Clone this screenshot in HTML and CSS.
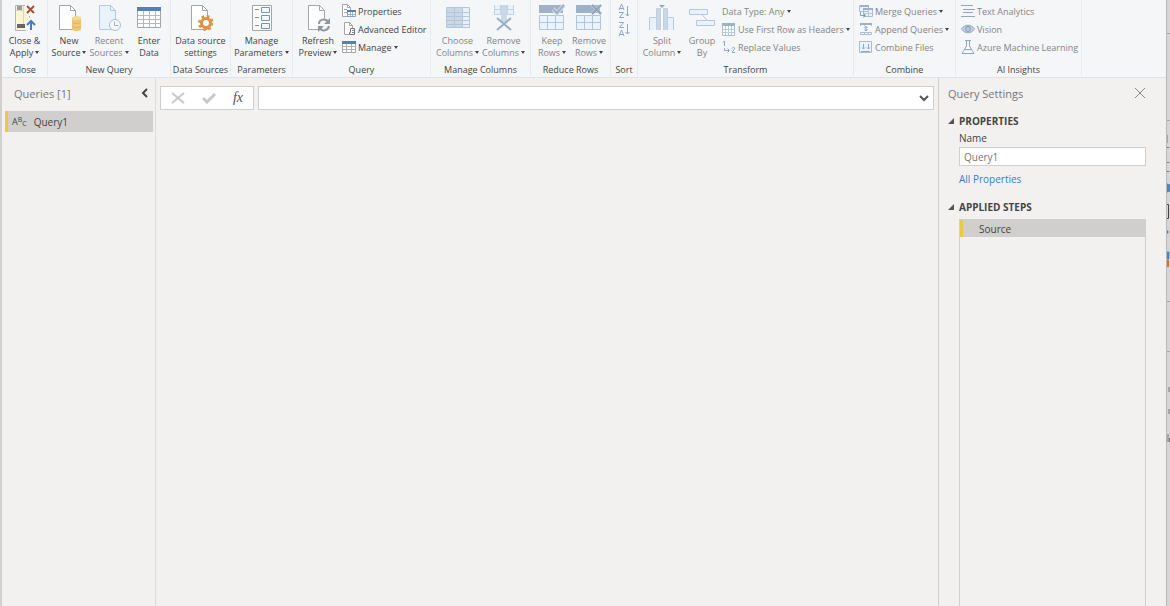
FILE: index.html
```html
<!DOCTYPE html>
<html lang="en">
<head>
    <meta charset="UTF-8">
    <meta name="viewport" content="width=device-width, initial-scale=1.0">
    <title>Power Query Editor</title>
    <link rel="stylesheet" href="styles.css">
</head>
<body>
    <div class="window">
        <!-- Ribbon -->
        <header class="ribbon">
            <section class="group close">
                <div class="tools">
                    <button class="big">
                        <svg width="24" height="28" viewBox="0 0 24 28"><path d="M2.500 1.500h14v25h-14z" fill="#fbf6cf" stroke="#b5b5b5"/><path d="M4 2h5v4H4z" fill="#9b9b9b"/><path d="M3 6.500h7M10.500 2v18" stroke="#d5d5c8"/><path d="M4 20h8v4H4z" fill="#66666a"/><path d="M12 0h12v12H12zM13 14h11v14H13z" fill="#f4f6f8"/><path d="M12 11l4-4v8l-4 4z" fill="#fbf6cf"/><path d="M14 2l7 7M21 2l-7 7" stroke="#a8532f" stroke-width="2"/><path d="M18 26v-8M14 21l4-4 4 4" fill="none" stroke="#4a7ebb" stroke-width="2"/></svg>
                        <span>Close &amp;<br>Apply<i class="caret"></i></span>
                    </button>
                </div>
                <h2>Close</h2>
            </section>
            <section class="group new-query">
                <div class="tools">
                    <button class="big">
                        <svg width="24" height="28" viewBox="0 0 24 28"><path d="M2.500 1.500h11l5 5v19h-16z" fill="#fff" stroke="#a6a6a6"/><path d="M13.500 1.500v5h5" fill="none" stroke="#a6a6a6"/><path d="M15 14v11c0 3 9 3 9 0V14z" fill="#eec779"/><ellipse cx="19.500" cy="14" rx="4.500" ry="2" fill="#f4d999"/><path d="M15 18c1 2 8 2 9 0M15 22c1 2 8 2 9 0" fill="none" stroke="#e4b45c"/></svg>
                        <span>New<br>Source<i class="caret"></i></span>
                    </button>
                    <button class="big off">
                        <svg width="24" height="28" viewBox="0 0 24 28"><path d="M2.500 1.500h11l5 5v19h-16z" fill="#eaf2fc" stroke="#b3cae2"/><path d="M13.500 1.500v5h5" fill="none" stroke="#b3cae2"/><circle cx="18" cy="21" r="5.500" fill="#f5f8fc" stroke="#a9bfd7"/><path d="M17.500 17.500v4h4" fill="none" stroke="#9cb4cd"/></svg>
                        <span>Recent<br>Sources<i class="caret"></i></span>
                    </button>
                    <button class="big">
                        <svg width="24" height="28" viewBox="0 0 24 28"><path d="M.500 4.500h23v19H.500z" fill="#fff" stroke="#a6a6a6"/><path d="M0 3h24v4H0z" fill="#4e82bd"/><path d="M1 11.500h22M1 15.500h22M1 19.500h22M6.500 7v16M12.500 7v16M18.500 7v16" stroke="#b8b8b8"/></svg>
                        <span>Enter<br>Data</span>
                    </button>
                </div>
                <h2>New Query</h2>
            </section>
            <section class="group sources">
                <div class="tools">
                    <button class="big">
                        <svg width="24" height="28" viewBox="0 0 24 28"><path d="M2.500 1.500h11l5 5v19h-16z" fill="#fff" stroke="#a6a6a6"/><path d="M13.500 1.500v5h5" fill="none" stroke="#a6a6a6"/><circle cx="17" cy="19" r="6.500" fill="none" stroke="#dc9145" stroke-width="3" stroke-dasharray="2.550 2.550"/><circle cx="17" cy="19" r="4.500" fill="#fff" stroke="#dc9145" stroke-width="3"/></svg>
                        <span>Data source<br>settings</span>
                    </button>
                </div>
                <h2>Data Sources</h2>
            </section>
            <section class="group parameters">
                <div class="tools">
                    <button class="big">
                        <svg width="20" height="28" viewBox="0 0 20 28"><path d="M.500 1.500h19v25H.500z" fill="#fff" stroke="#a6a6a6"/><path d="M9.500 3.500h8v5h-8zM9.500 11.500h8v5h-8zM9.500 19.500h8v5h-8z" fill="#f5f9ff" stroke="#6d96c6"/><path d="M3 5.500h4M3 13.500h4M3 21.500h4" stroke="#8f8f8f"/></svg>
                        <span>Manage<br>Parameters<i class="caret"></i></span>
                    </button>
                </div>
                <h2>Parameters</h2>
            </section>
            <section class="group query">
                <div class="tools">
                    <button class="big">
                        <svg width="24" height="28" viewBox="0 0 24 28"><path d="M2.500 1.500h11l5 5v19h-16z" fill="#fff" stroke="#a6a6a6"/><path d="M13.500 1.500v5h5" fill="none" stroke="#a6a6a6"/><path d="M12 14h12v13H12z" fill="#f4f6f8"/><path d="M13 20c0-5 7-6 9-2M23 22c-1 5-7 6-9 2" fill="none" stroke="#8e969e" stroke-width="2"/><path d="M24 14v6h-6zM12 28v-6h6z" fill="#8e969e"/></svg>
                        <span>Refresh<br>Preview<i class="caret"></i></span>
                    </button>
                    <div class="rows">
                        <button class="small"><svg width="14" height="14" viewBox="0 0 14 14"><path d="M.500.500h5l3 3v9h-8z" fill="#fff" stroke="#a6a6a6"/><path d="M5.500.500v3h3" fill="none" stroke="#a6a6a6"/><path d="M2 5.500h3M2 8.500h3" stroke="#8faed0"/><path d="M5.500 6.500h8v6h-8z" fill="#fff" stroke="#8c9fb5"/><path d="M5 6h9v2H5z" fill="#4e82bd"/><path d="M6 10.500h7M8.500 8v4M10.500 8v4" stroke="#9cb3cc"/></svg>Properties</button>
                        <button class="small"><svg width="14" height="14" viewBox="0 0 14 14"><path d="M2.500.500h5l3 3v9h-8z" fill="#fff" stroke="#a6a6a6"/><path d="M7.500.500v3h3" fill="none" stroke="#a6a6a6"/><path d="M8.500 6.500h4v6h-5v-2h1z" fill="#fff" stroke="#777"/><path d="M10 8.500h2M10 10.500h2" stroke="#888"/></svg>Advanced Editor</button>
                        <button class="small"><svg width="14" height="14" viewBox="0 0 14 14"><path d="M.500 1.500h13v11H.500z" fill="#fff" stroke="#a6a6a6"/><path d="M0 1h14v3H0z" fill="#4e82bd"/><path d="M1 6.500h12M1 9.500h12M4.500 4v8M9.500 4v8" stroke="#b0b0b0"/></svg>Manage<i class="caret"></i></button>
                    </div>
                </div>
                <h2>Query</h2>
            </section>
            <section class="group columns">
                <div class="tools">
                    <button class="big off">
                        <svg width="24" height="28" viewBox="0 0 24 28"><path d="M.500 3.500h23v20H.500z" fill="#e8f1fb" stroke="#b4c6da"/><path d="M1 4h15v19H1z" fill="#c9d7e7"/><path d="M1 8.500h22M1 12.500h22M1 16.500h22M1 20.500h22M8.500 4v19M16.500 4v19" stroke="#b4c6da"/></svg>
                        <span>Choose<br>Columns<i class="caret"></i></span>
                    </button>
                    <button class="big off">
                        <svg width="20" height="28" viewBox="0 0 20 28"><path d="M.500 1v9.500h6V1M13.500 1v9.500h6V1M.500 5.500h6M13.500 5.500h6" fill="#e8f1fb" stroke="#c0d2e6"/><path d="M7 1h6v17H7z" fill="#c9d7e7"/><path d="M3 14l14 12M17 14L3 26" stroke="#9baec4" stroke-width="2"/></svg>
                        <span>Remove<br>Columns<i class="caret"></i></span>
                    </button>
                </div>
                <h2>Manage Columns</h2>
            </section>
            <section class="group reduce">
                <div class="tools">
                    <button class="big off">
                        <svg width="26" height="28" viewBox="0 0 26 28"><path d="M0 1h24v8H0z" fill="#9fb1c7"/><path d="M.500 11.500h24v14H.500zM1 18.500h23M8.500 12v13M16.500 12v13" fill="#eaf3fd" stroke="#b2c6dd"/><path d="M14 5l4 4 7-8" fill="none" stroke="#d5dee9" stroke-width="4"/><path d="M14 5l4 4 7-8" fill="none" stroke="#9fb1c7" stroke-width="2"/></svg>
                        <span>Keep<br>Rows<i class="caret"></i></span>
                    </button>
                    <button class="big off">
                        <svg width="26" height="28" viewBox="0 0 26 28"><path d="M0 1h24v8H0z" fill="#9fb1c7"/><path d="M.500 11.500h24v14H.500zM1 18.500h23M8.500 12v13M16.500 12v13" fill="#eaf3fd" stroke="#b2c6dd"/><path d="M16 1l9 9M25 1l-9 9" stroke="#d5dee9" stroke-width="3"/><path d="M16 1l9 9M25 1l-9 9" stroke="#8fa3bb" stroke-width="2"/></svg>
                        <span>Remove<br>Rows<i class="caret"></i></span>
                    </button>
                </div>
                <h2>Reduce Rows</h2>
            </section>
            <section class="group sort">
                <div class="tools rows">
                    <button class="small" aria-label="Sort ascending"><svg width="12" height="16" viewBox="0 0 12 16"><path d="M1 7l2.500-6L6 7M2 5.500h3M1 9.500h4.500L1.500 14.500H6M9.500 3v10M7.500 11l2 2 2-2" fill="none" stroke="#91a8c2"/></svg></button>
                    <button class="small" aria-label="Sort descending"><svg width="12" height="16" viewBox="0 0 12 16"><path d="M1 1.500h4.500L1.500 6.500H6M1 15l2.500-6L6 15M2 13.500h3M9.500 3v10M7.500 11l2 2 2-2" fill="none" stroke="#91a8c2"/></svg></button>
                </div>
                <h2>Sort</h2>
            </section>
            <section class="group transform">
                <div class="tools">
                    <button class="big off">
                        <svg width="26" height="28" viewBox="0 0 26 28"><path d="M.500 26V13.500h7V26M18.500 26V13.500h6V26" fill="#e8f2fd" stroke="#b6cbe2"/><path d="M7.500 26V4.500h4V26M14.500 26V4.500h4V26" fill="#c9d7e7" stroke="#c0d0e2"/><path d="M10 1h6l-3 3z" fill="#8fa9c5"/><path d="M13 5v22" stroke="#fff"/></svg>
                        <span>Split<br>Column<i class="caret"></i></span>
                    </button>
                    <button class="big off">
                        <svg width="26" height="28" viewBox="0 0 26 28"><path d="M.500 5.500h18v5H.500zM7.500 16.500h18v5h-18zM13 11l5 5" fill="#eaf3fd" stroke="#b4c9e0"/></svg>
                        <span>Group<br>By</span>
                    </button>
                    <div class="rows">
                        <button class="small off">Data Type: Any<i class="caret"></i></button>
                        <button class="small off"><svg width="14" height="14" viewBox="0 0 14 14"><path d="M.500 1.500h12v12H.500z" fill="#fff" stroke="#a9bed5"/><path d="M0 1h13v3H0z" fill="#9fb1c7"/><path d="M1 7.500h11M1 10.500h11M3.500 4v9M6.500 4v9M9.500 4v9" stroke="#b8cce1"/></svg>Use First Row as Headers<i class="caret"></i></button>
                        <button class="small off"><svg width="14" height="14" viewBox="0 0 14 14"><path d="M1 2.500L2.500 1v5M2.500 8v2.500H7M5.500 8.500l2 2-2 2M10 8.500c1-2 3-1 2.500.500L10 12.500h3" fill="none" stroke="#91a8c2"/></svg>Replace Values</button>
                    </div>
                </div>
                <h2>Transform</h2>
            </section>
            <section class="group combine">
                <div class="tools rows">
                    <button class="small off"><svg width="14" height="14" viewBox="0 0 14 14"><path d="M.500 1.500h9v6h-9zM4.500 4.500h9v8h-9z" fill="#eaf3fd" stroke="#a9bed5"/><path d="M1 1h9v2H1zM4 4h10v2H4z" fill="#9fb1c7"/><path d="M5 9.500h8M9.500 6v6" stroke="#b8cce1"/><path d="M1.500 8v3.500H6M4.500 9.500l2 2-2 2" fill="none" stroke="#7f9cba"/></svg>Merge Queries<i class="caret"></i></button>
                    <button class="small off"><svg width="14" height="14" viewBox="0 0 14 14"><path d="M1 1h12v2H1z" fill="#9fb1c7"/><path d="M1.500 3v1M5.500 3v1M12.500 3v1M1.500 10.500h11v2h-11zM5.500 10v2M9.500 10v2" fill="none" stroke="#a9bed5"/><path d="M7 4.500v4M5.500 6L7 4.500 8.500 6M5.500 7.500L7 9l1.500-1.500" fill="none" stroke="#7f9cba"/></svg>Append Queries<i class="caret"></i></button>
                    <button class="small off"><svg width="14" height="14" viewBox="0 0 14 14"><path d="M.500 1.500h12v11H.500z" fill="#eaf3fd" stroke="#a9bed5"/><path d="M4.500 4v5M3 7.500L4.500 9 6 7.500M9.500 4v5M8 7.500L9.500 9 11 7.500M2 11.500h9" fill="none" stroke="#91a8c2"/></svg>Combine Files</button>
                </div>
                <h2>Combine</h2>
            </section>
            <section class="group insights">
                <div class="tools rows">
                    <button class="small off"><svg width="14" height="14" viewBox="0 0 14 14"><path d="M0 1.500h12M2 5.500h12M2 8.500h10M0 12.500h14" stroke="#91a8c2"/></svg>Text Analytics</button>
                    <button class="small off"><svg width="14" height="14" viewBox="0 0 14 14"><path d="M.500 7c3-5 10-5 13 0-3 5-10 5-13 0z" fill="#c3d2e2" stroke="#91a8c2"/><circle cx="7" cy="7" r="2.500" fill="#b9cbe0" stroke="#7f9cba"/></svg>Vision</button>
                    <button class="small off"><svg width="14" height="14" viewBox="0 0 14 14"><path d="M4 .500h6M5.500 1v5L1 13.500h12L8.500 6V1M3.500 9.500h7" fill="none" stroke="#91a8c2"/></svg>Azure Machine Learning</button>
                </div>
                <h2>AI Insights</h2>
            </section>
        </header>

        <main class="editor">
            <!-- Queries pane -->
            <aside class="queries">
                <div class="queries-head">
                    <h1>Queries [1]</h1>
                    <button aria-label="Collapse queries"><svg width="8" height="10" viewBox="0 0 8 10"><path d="M6 1L2 5l4 4" fill="none" stroke="#444" stroke-width="2"/></svg></button>
                </div>
                <button class="query-item">
                    <span class="type">A<sup>B</sup><sub>C</sub></span>
                    Query1
                </button>
            </aside>

            <!-- Formula bar -->
            <section class="workspace">
                <div class="formula">
                    <div class="formula-tools">
                        <button aria-label="Cancel"><svg width="14" height="12" viewBox="0 0 14 12"><path d="M1 1l12 10M13 1L1 11" stroke="#c8c8c8" stroke-width="2"/></svg></button>
                        <button aria-label="Commit"><svg width="14" height="12" viewBox="0 0 14 12"><path d="M1 6l4 4 8-8" fill="none" stroke="#c8c8c8" stroke-width="3"/></svg></button>
                        <button class="fx">fx</button>
                    </div>
                    <div class="formula-box">
                        <input type="text" aria-label="Formula">
                        <button aria-label="Expand formula bar"><svg width="10" height="8" viewBox="0 0 10 8"><path d="M1 2l4 4 4-4" fill="none" stroke="#555" stroke-width="2"/></svg></button>
                    </div>
                </div>
            </section>

            <!-- Query settings -->
            <aside class="settings">
                <div class="settings-head">
                    <h1>Query Settings</h1>
                    <button aria-label="Close settings"><svg width="12" height="12" viewBox="0 0 12 12"><path d="M1 1l10 10M11 1L1 11" stroke="#8a8a8a"/></svg></button>
                </div>
                <h3><svg width="6" height="6" viewBox="0 0 6 6"><path d="M6 0v6H0z" fill="#555"/></svg>PROPERTIES</h3>
                <div class="properties">
                    <label for="name">Name</label>
                    <input id="name" type="text" value="Query1">
                    <a href="#">All Properties</a>
                </div>
                <h3><svg width="6" height="6" viewBox="0 0 6 6"><path d="M6 0v6H0z" fill="#555"/></svg>APPLIED STEPS</h3>
                <div class="steps">
                    <button>Source</button>
                </div>
            </aside>
        </main>
    </div>

    <!-- Edge of the window behind -->
    <svg class="behind" width="3" height="606" viewBox="0 0 3 606" aria-hidden="true"><path d="M0 33.500h3M0 120.500h3M0 301.500h3M0 351.500h3" stroke="#aaa"/><path d="M0 147.500h2M0 162.500h2M0 171.500h2M0 135v8" stroke="#777"/><path d="M0 184a4 4 0 0 1 0 8M0 231h1v2H0zM0 252h2v7H0z" fill="#4f86c0" stroke="#4f86c0"/><path d="M0 204.500h1.500v14H0" fill="none" stroke="#444"/><path d="M0 260h2v7H0z" fill="#c9732d"/><path d="M2 387v5M2 409v5M1 434v8M2.500 438v4" stroke="#777"/></svg>
</body>
</html>
```

FILE: styles.css
```css
* {
    margin: 0;
    padding: 0;
    box-sizing: border-box;
}

body {
    display: flex;
    height: 100vh;
    overflow: hidden;
    background-color: #dcdcdc;
    font-family: "Open Sans", sans-serif;
    font-size: 9px;
    color: #444;
}

button, input {
    font: inherit;
    color: inherit;
    border: none;
    background: none;
}

svg {
    flex-shrink: 0;
}

.window {
    flex: 1;
    min-width: 0;
    display: flex;
    flex-direction: column;
    border-left: 2px solid #d0d0d0;
    border-right: 1px solid #b8b8b8;
    background-color: #f2f1ef;
}

.behind {
    background-color: #d6d6d6;
}

/* Ribbon */
.ribbon {
    display: flex;
    height: 78px;
    background-color: #f4f6f8;
    border-bottom: 1px solid #e0e2e3;
}

.group {
    display: flex;
    flex-direction: column;
    flex-shrink: 0;
    height: 76px;
    border-right: 1px solid #e8ebed;
}

.group h2 {
    font-size: 9px;
    font-weight: normal;
    line-height: 13px;
    text-align: center;
    white-space: nowrap;
}

.tools {
    flex: 1;
    display: flex;
    justify-content: center;
}

.big {
    display: flex;
    flex-direction: column;
    align-items: center;
    gap: 3px;
    width: 40px;
    padding-top: 4px;
    line-height: 12px;
    white-space: nowrap;
}

.rows {
    flex-direction: column;
    justify-content: flex-start;
    padding-top: 2px;
}

.small {
    display: flex;
    align-items: center;
    gap: 2px;
    height: 18px;
    white-space: nowrap;
}

.off {
    color: #858585;
}

.caret {
    display: inline-block;
    margin-left: 2px;
    border: 2px solid transparent;
    border-top: 3px solid #444;
    border-bottom: none;
    vertical-align: 2px;
}

.small .caret {
    margin-left: 0;
}

.close {
    width: 46px;
}

.new-query {
    width: 123px;
}

.sources {
    width: 60px;
}

.parameters {
    width: 62px;
}

.query {
    width: 138px;
}

.query .tools {
    justify-content: flex-start;
    padding-left: 5px;
}

.query .rows {
    padding-left: 4px;
}

.columns {
    width: 100px;
}

.columns .big {
    width: 46px;
}

.reduce {
    width: 80px;
}

.reduce .big {
    width: 37px;
}

.sort {
    width: 27px;
}

.sort .tools {
    align-items: center;
}

.transform {
    width: 216px;
}

.transform .tools {
    justify-content: flex-start;
    padding-left: 4px;
}

.combine {
    width: 102px;
}

.combine .tools, .insights .tools {
    padding-left: 5px;
}

.insights {
    width: 126px;
}

/* Editor */
.editor {
    flex: 1;
    min-height: 0;
    display: flex;
}

h1 {
    font-size: 11px;
    font-weight: normal;
    line-height: 16px;
    color: #777;
}

.queries {
    width: 154px;
    padding: 8px 2px 8px 3px;
    border-right: 1px solid #dcdcdc;
}

.queries-head {
    display: flex;
    justify-content: space-between;
    padding: 0 4px 0 9px;
    margin-bottom: 9px;
}

.query-item {
    display: flex;
    align-items: center;
    gap: 7px;
    width: 100%;
    height: 21px;
    padding-left: 4px;
    border-left: 3px solid #ecc846;
    background-color: #d0cfcd;
    font-size: 10px;
}

.type {
    font-size: 9px;
    line-height: 12px;
}

.type sup, .type sub {
    font-size: 7px;
    line-height: 0;
}

.type sub {
    vertical-align: -1px;
}

.type sup {
    vertical-align: 3px;
}

.workspace {
    flex: 1;
    min-width: 0;
    padding: 8px 4px;
}

.formula {
    display: flex;
    gap: 4px;
    height: 24px;
}

.formula-tools, .formula-box {
    display: flex;
    align-items: center;
    border: 1px solid #cfcfcf;
    background-color: #fff;
}

.formula-tools {
    width: 94px;
    justify-content: space-between;
    padding: 0 10px;
}

.formula-tools svg, .formula-box svg {
    display: block;
}

.fx {
    font-family: "Liberation Serif", serif;
    font-size: 14px;
    font-style: italic;
    color: #555;
}

.formula-box {
    flex: 1;
    padding: 0 4px;
}

.formula-box input {
    flex: 1;
    min-width: 0;
}

/* Settings pane */
.settings {
    display: flex;
    flex-direction: column;
    width: 228px;
    padding: 8px 20px 0 9px;
    border-left: 1px solid #d0d0d0;
    font-size: 10px;
}

.settings-head {
    display: flex;
    justify-content: space-between;
    margin-bottom: 11px;
}

h3 {
    display: flex;
    align-items: center;
    gap: 5px;
    font-size: 10px;
    line-height: 16px;
}

.properties {
    display: flex;
    flex-direction: column;
    align-items: flex-start;
    padding-left: 11px;
    margin-bottom: 13px;
}

.properties label {
    line-height: 18px;
}

.properties input {
    width: 100%;
    height: 19px;
    padding-left: 4px;
    border: 1px solid #cfcfcf;
    background-color: #fff;
    color: #777;
}

.properties a {
    margin-top: 6px;
    line-height: 14px;
    color: #3a7fc4;
    text-decoration: none;
}

.steps {
    flex: 1;
    margin: 4px 0 0 11px;
    border: 1px solid #cfcfcf;
    border-bottom: none;
}

.steps button {
    display: block;
    width: 100%;
    height: 17px;
    padding-left: 16px;
    border-left: 3px solid #ecc846;
    background-color: #d0cfcd;
    text-align: left;
}
```
